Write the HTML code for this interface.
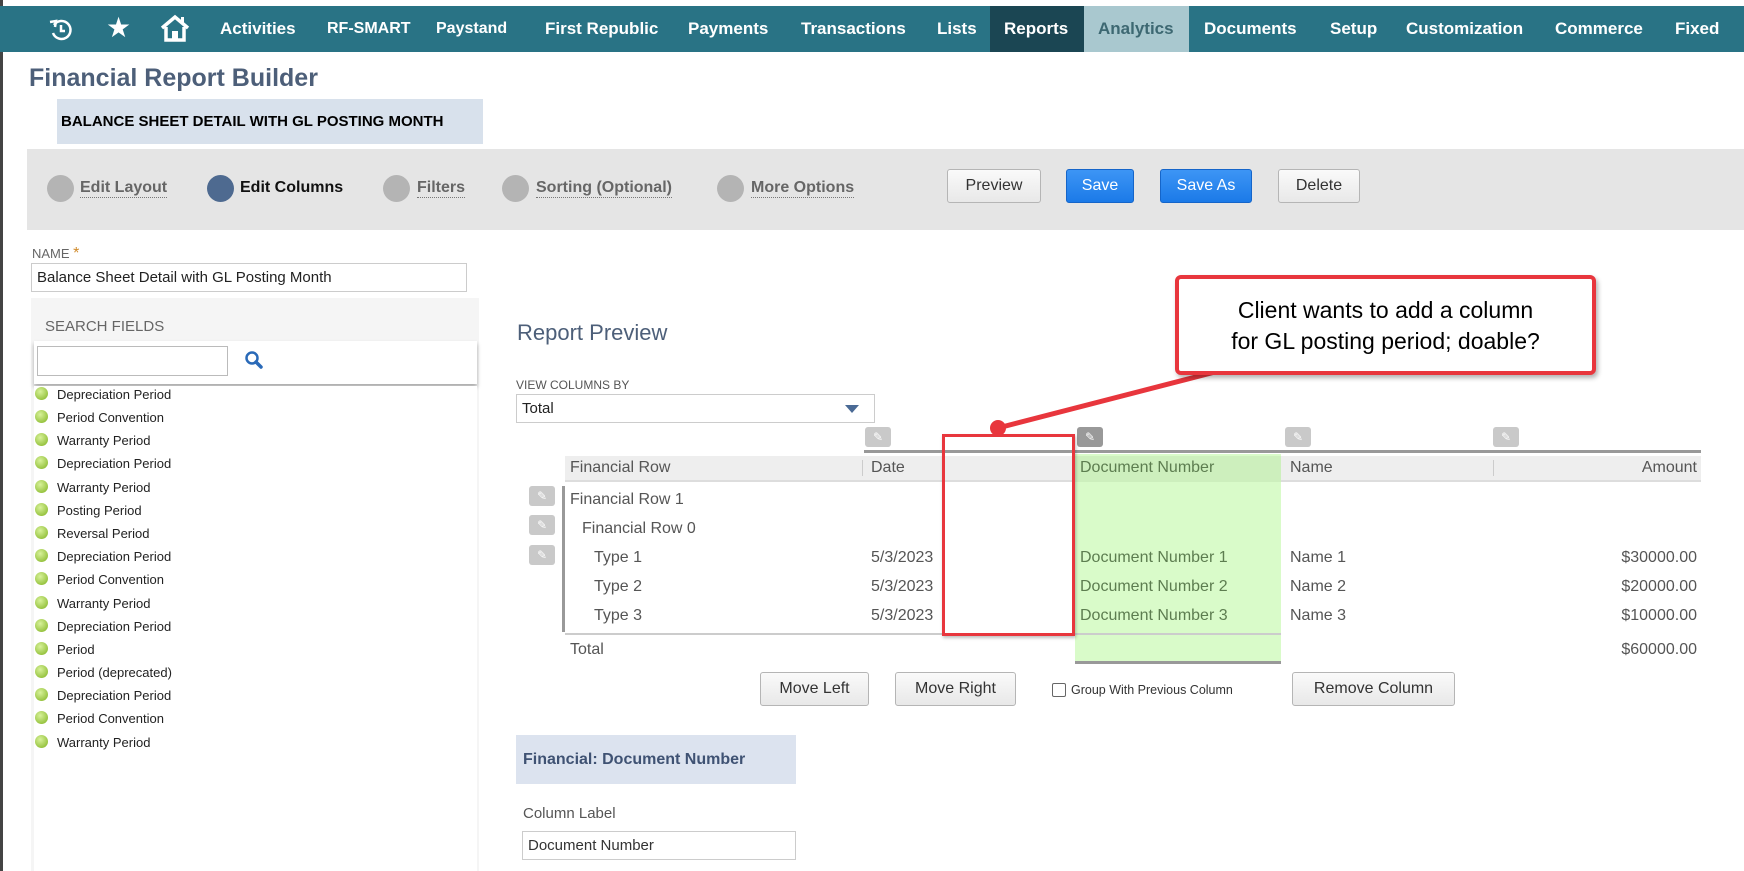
<!DOCTYPE html>
<html><head><meta charset="utf-8"><style>
*{margin:0;padding:0;box-sizing:border-box}
body{width:1744px;height:871px;position:relative;overflow:hidden;background:#fff;font-family:"Liberation Sans","DejaVu Sans",sans-serif;color:#333}
.a{position:absolute;white-space:nowrap}
.nav{position:absolute;left:0;top:6px;width:1744px;height:46px;background:#297385}
.nv{position:absolute;top:6px;height:46px;line-height:46px;color:#fff;font-weight:bold;font-size:17px}
.btn{position:absolute;height:34px;line-height:32px;text-align:center;font-size:16px;border:1px solid #b5b5b5;border-radius:3px;background:linear-gradient(#fafafa,#e8e8e8);color:#333}
.blue{background:linear-gradient(#3d95f5,#1b7ae8);border-color:#1565c9;color:#fff}
.circ{position:absolute;width:27px;height:27px;border-radius:50%;background:#b4b4b4;top:175px}
.st{position:absolute;top:178px;font-size:16px;font-weight:bold;color:#666;border-bottom:1px dotted #777;line-height:19px}
.li{position:absolute;left:57px;font-size:13px;color:#222}
.ic{position:absolute;left:35px;width:13px;height:13px;border-radius:50%;background:radial-gradient(circle at 40% 35%,#d8f29a,#7fb21f);}
.pen{position:absolute;width:26px;height:20px;background:#c9c9c9;border-radius:3px;color:#fff;font-size:12px;text-align:center;line-height:20px}
.td{position:absolute;font-size:16px;color:#555}
.g{color:#5d7d50}
</style></head><body>
<div class="a" style="left:0;top:0;width:3px;height:871px;background:#444"></div>
<div class="nav"></div>
<div class="a" style="left:990px;top:6px;width:94px;height:46px;background:#1b4653"></div>
<div class="a" style="left:1084px;top:6px;width:105px;height:46px;background:#a9c8cf"></div>
<svg class="a" style="left:48px;top:17px" width="26" height="26" viewBox="0 0 26 26"><path d="M6 8 A9 9 0 1 1 5 16" fill="none" stroke="#fff" stroke-width="2.5"/><path d="M2 5 L8 4 L7 10" fill="none" stroke="#fff" stroke-width="2.5"/><path d="M13 8 V14 H17" fill="none" stroke="#fff" stroke-width="2.5"/></svg>
<div class="a" style="left:106px;top:10px;color:#fff;font-size:28px;line-height:36px">★</div>
<svg class="a" style="left:160px;top:14px" width="30" height="28" viewBox="0 0 30 28"><path d="M2 14 L15 3 L28 14" fill="none" stroke="#fff" stroke-width="3.5"/><path d="M6 13 V26 H24 V13" fill="none" stroke="#fff" stroke-width="3.5"/><rect x="12" y="17" width="6" height="9" fill="#fff"/><rect x="21" y="3" width="3" height="7" fill="#fff"/></svg>
<div class="nv" style="left:220px">Activities</div>
<div class="nv" style="left:327px;font-size:16px">RF-SMART</div>
<div class="nv" style="left:436px;font-size:16px">Paystand</div>
<div class="nv" style="left:545px">First Republic</div>
<div class="nv" style="left:688px">Payments</div>
<div class="nv" style="left:801px">Transactions</div>
<div class="nv" style="left:937px">Lists</div>
<div class="nv" style="left:1004px">Reports</div>
<div class="nv" style="left:1098px;color:#3d6872">Analytics</div>
<div class="nv" style="left:1204px">Documents</div>
<div class="nv" style="left:1330px">Setup</div>
<div class="nv" style="left:1406px">Customization</div>
<div class="nv" style="left:1555px">Commerce</div>
<div class="nv" style="left:1675px">Fixed As</div>

<div class="a" style="left:29px;top:64px;font-size:25px;font-weight:bold;color:#4d5f79">Financial Report Builder</div>
<div class="a" style="left:57px;top:99px;width:426px;height:45px;background:#d8e1ec;font-size:15px;font-weight:bold;color:#000;line-height:45px;padding-left:4px">BALANCE SHEET DETAIL WITH GL POSTING MONTH</div>

<div class="a" style="left:27px;top:149px;width:1717px;height:81px;background:#e5e5e5"></div>
<div class="circ" style="left:47px"></div><div class="st" style="left:80px">Edit Layout</div>
<div class="circ" style="left:207px;background:#4e6a90"></div><div class="st" style="left:240px;color:#111;border:none">Edit Columns</div>
<div class="circ" style="left:383px"></div><div class="st" style="left:417px">Filters</div>
<div class="circ" style="left:502px"></div><div class="st" style="left:536px">Sorting (Optional)</div>
<div class="circ" style="left:717px"></div><div class="st" style="left:751px">More Options</div>
<div class="btn" style="left:947px;top:169px;width:94px">Preview</div>
<div class="btn blue" style="left:1066px;top:169px;width:68px">Save</div>
<div class="btn blue" style="left:1160px;top:169px;width:92px">Save As</div>
<div class="btn" style="left:1278px;top:169px;width:82px">Delete</div>

<div class="a" style="left:32px;top:245px;font-size:13px;color:#666">NAME <span style="color:#d08a2a;font-size:16px">*</span></div>
<div class="a" style="left:31px;top:263px;width:436px;height:29px;border:1px solid #ccc;font-size:15px;line-height:27px;padding-left:5px;color:#222">Balance Sheet Detail with GL Posting Month</div>
<div class="a" style="left:31px;top:298px;width:448px;height:573px;background:#f5f5f5"></div>
<div class="a" style="left:45px;top:318px;font-size:15px;color:#666">SEARCH FIELDS</div>
<div class="a" style="left:34px;top:341px;width:443px;height:43px;background:#fff;box-shadow:0 3px 4px #aaa"></div>
<div class="a" style="left:37px;top:346px;width:191px;height:30px;border:1px solid #bbb;background:#fff"></div>
<svg class="a" style="left:244px;top:350px" width="20" height="20" viewBox="0 0 20 20"><circle cx="8" cy="8" r="5.5" fill="none" stroke="#2a6ab8" stroke-width="2.5"/><path d="M12 12 L17 17" stroke="#2a6ab8" stroke-width="3.5" stroke-linecap="round"/></svg>
<div class="a" style="left:34px;top:386px;width:443px;height:485px;background:#fff"></div>
<div class="ic" style="top:387px"></div><div class="li" style="top:387px">Depreciation Period</div>
<div class="ic" style="top:410px"></div><div class="li" style="top:410px">Period Convention</div>
<div class="ic" style="top:433px"></div><div class="li" style="top:433px">Warranty Period</div>
<div class="ic" style="top:456px"></div><div class="li" style="top:456px">Depreciation Period</div>
<div class="ic" style="top:480px"></div><div class="li" style="top:480px">Warranty Period</div>
<div class="ic" style="top:503px"></div><div class="li" style="top:503px">Posting Period</div>
<div class="ic" style="top:526px"></div><div class="li" style="top:526px">Reversal Period</div>
<div class="ic" style="top:549px"></div><div class="li" style="top:549px">Depreciation Period</div>
<div class="ic" style="top:572px"></div><div class="li" style="top:572px">Period Convention</div>
<div class="ic" style="top:596px"></div><div class="li" style="top:596px">Warranty Period</div>
<div class="ic" style="top:619px"></div><div class="li" style="top:619px">Depreciation Period</div>
<div class="ic" style="top:642px"></div><div class="li" style="top:642px">Period</div>
<div class="ic" style="top:665px"></div><div class="li" style="top:665px">Period (deprecated)</div>
<div class="ic" style="top:688px"></div><div class="li" style="top:688px">Depreciation Period</div>
<div class="ic" style="top:711px"></div><div class="li" style="top:711px">Period Convention</div>
<div class="ic" style="top:735px"></div><div class="li" style="top:735px">Warranty Period</div>

<div class="a" style="left:517px;top:320px;font-size:22px;color:#4d5f79">Report Preview</div>
<div class="a" style="left:516px;top:378px;font-size:12px;color:#555">VIEW COLUMNS BY</div>
<div class="a" style="left:516px;top:394px;width:359px;height:29px;border:1px solid #ccc;font-size:15px;line-height:27px;padding-left:5px;color:#222">Total</div>
<div class="a" style="left:845px;top:405px;width:0;height:0;border-left:7px solid transparent;border-right:7px solid transparent;border-top:8px solid #4a6a95"></div>

<div class="pen" style="left:865px;top:427px">✎</div>
<div class="pen" style="left:1077px;top:427px;background:#999">✎</div>
<div class="pen" style="left:1285px;top:427px">✎</div>
<div class="pen" style="left:1493px;top:427px">✎</div>
<div class="a" style="left:864px;top:450px;width:837px;height:3px;background:#999"></div>
<div class="a" style="left:565px;top:456px;width:1136px;height:26px;background:#eee;border-bottom:2px solid #ddd"></div>
<div class="a" style="left:1075px;top:454px;width:206px;height:210px;background:#d9fbc9;border-bottom:3px solid #999"></div>
<div class="a" style="left:1075px;top:456px;width:206px;height:26px;background:#cdefbd"></div>
<div class="td" style="left:570px;top:459px">Financial Row</div>
<div class="td" style="left:871px;top:459px">Date</div>
<div class="td g" style="left:1080px;top:459px">Document Number</div>
<div class="td" style="left:1290px;top:459px">Name</div>
<div class="td" style="right:47px;top:459px">Amount</div>
<div class="a" style="left:862px;top:460px;width:1px;height:16px;background:#ccc"></div>
<div class="a" style="left:1493px;top:460px;width:1px;height:16px;background:#ccc"></div>

<div class="a" style="left:562px;top:486px;width:3px;height:146px;background:#999"></div>
<div class="pen" style="left:529px;top:486px">✎</div>
<div class="pen" style="left:529px;top:515px">✎</div>
<div class="pen" style="left:529px;top:545px">✎</div>
<div class="td" style="left:570px;top:491px">Financial Row 1</div>
<div class="td" style="left:582px;top:520px">Financial Row 0</div>
<div class="td" style="left:594px;top:549px">Type 1</div>
<div class="td" style="left:594px;top:578px">Type 2</div>
<div class="td" style="left:594px;top:607px">Type 3</div>
<div class="td" style="left:871px;top:549px">5/3/2023</div>
<div class="td" style="left:871px;top:578px">5/3/2023</div>
<div class="td" style="left:871px;top:607px">5/3/2023</div>
<div class="td g" style="left:1080px;top:549px">Document Number 1</div>
<div class="td g" style="left:1080px;top:578px">Document Number 2</div>
<div class="td g" style="left:1080px;top:607px">Document Number 3</div>
<div class="td" style="left:1290px;top:549px">Name 1</div>
<div class="td" style="left:1290px;top:578px">Name 2</div>
<div class="td" style="left:1290px;top:607px">Name 3</div>
<div class="td" style="right:47px;top:549px">$30000.00</div>
<div class="td" style="right:47px;top:578px">$20000.00</div>
<div class="td" style="right:47px;top:607px">$10000.00</div>
<div class="a" style="left:565px;top:633px;width:716px;height:2px;background:#ccc"></div>
<div class="td" style="left:570px;top:641px">Total</div>
<div class="td" style="right:47px;top:641px">$60000.00</div>

<div class="a" style="left:942px;top:434px;width:133px;height:202px;border:3px solid #e8363d;box-shadow:1px 2px 3px rgba(0,0,0,.25)"></div>

<div class="btn" style="left:760px;top:672px;width:109px">Move Left</div>
<div class="btn" style="left:895px;top:672px;width:121px">Move Right</div>
<div class="a" style="left:1052px;top:683px;width:14px;height:14px;border:1px solid #666;border-radius:2px;background:#fff"></div>
<div class="a" style="left:1071px;top:683px;font-size:12.5px;color:#333">Group With Previous Column</div>
<div class="btn" style="left:1292px;top:672px;width:163px">Remove Column</div>

<div class="a" style="left:516px;top:735px;width:280px;height:49px;background:#dce3ef;font-size:16px;font-weight:bold;color:#3f5273;line-height:49px;padding-left:7px">Financial: Document Number</div>
<div class="a" style="left:523px;top:805px;font-size:15px;color:#555">Column Label</div>
<div class="a" style="left:522px;top:831px;width:274px;height:29px;border:1px solid #ccc;font-size:15px;line-height:27px;padding-left:5px;color:#333">Document Number</div>

<svg class="a" style="left:0;top:0" width="1744" height="871"><line x1="1215" y1="372" x2="998" y2="428" stroke="#e8363d" stroke-width="5"/><circle cx="998" cy="428" r="8" fill="#e8363d"/></svg>
<div class="a" style="left:1175px;top:275px;width:421px;height:100px;border:4px solid #e8363d;border-radius:6px;background:#fff;box-shadow:2px 3px 5px rgba(0,0,0,.3);font-family:'Liberation Sans',sans-serif;font-size:23px;color:#000;text-align:center;line-height:31px;padding-top:16px;white-space:normal">Client wants to add a column<br>for GL posting period; doable?</div>
</body></html>
